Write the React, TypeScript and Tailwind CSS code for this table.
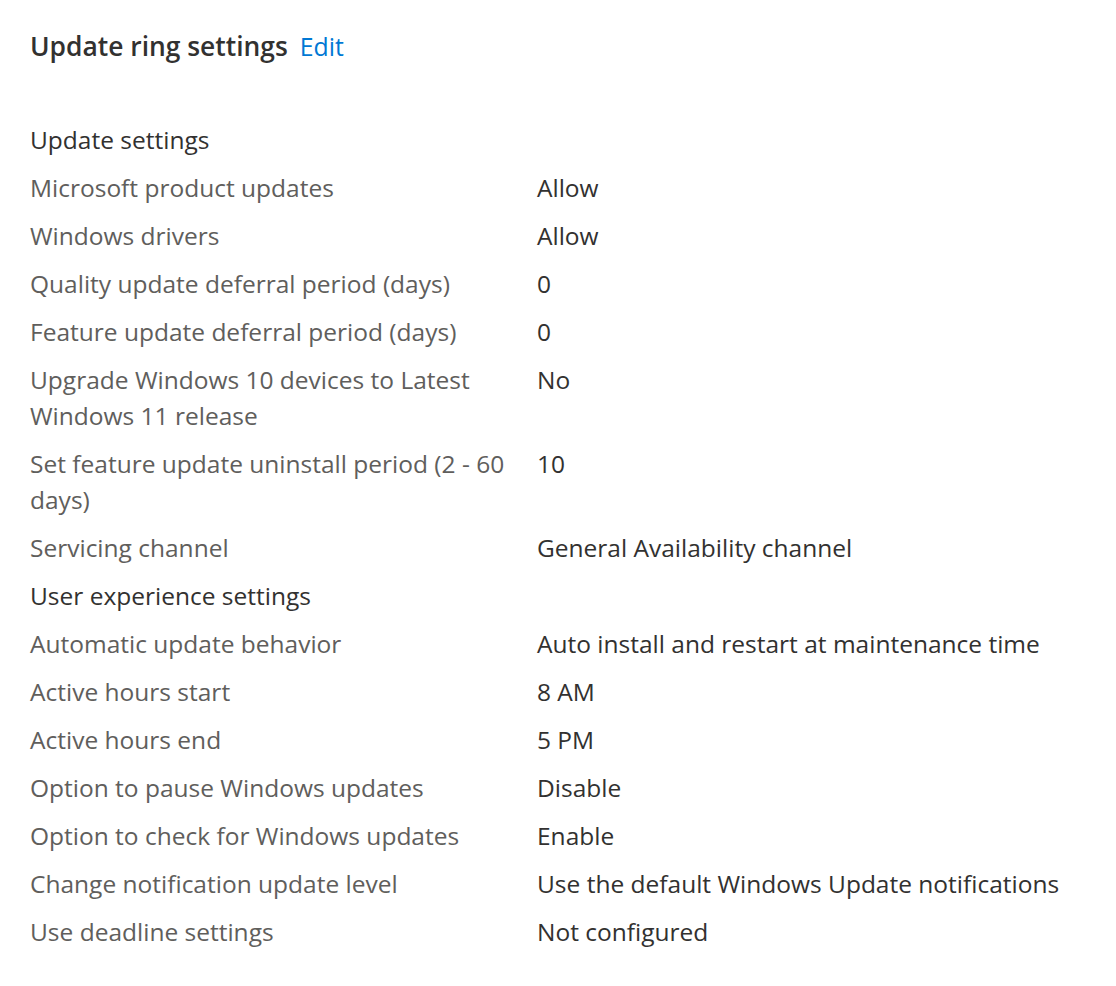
const sections = [
  {
    title: "Update settings",
    rows: [
      ["Microsoft product updates", "Allow"],
      ["Windows drivers", "Allow"],
      ["Quality update deferral period (days)", "0"],
      ["Feature update deferral period (days)", "0"],
      ["Upgrade Windows 10 devices to Latest Windows 11 release", "No"],
      ["Set feature update uninstall period (2 - 60 days)", "10"],
      ["Servicing channel", "General Availability channel"],
    ],
  },
  {
    title: "User experience settings",
    rows: [
      ["Automatic update behavior", "Auto install and restart at maintenance time"],
      ["Active hours start", "8 AM"],
      ["Active hours end", "5 PM"],
      ["Option to pause Windows updates", "Disable"],
      ["Option to check for Windows updates", "Enable"],
      ["Change notification update level", "Use the default Windows Update notifications"],
      ["Use deadline settings", "Not configured"],
    ],
  },
];

export default function App() {
  return (
    <div
      className="min-h-screen bg-white pl-[30px] pr-4 pt-[28px] text-[#323130]"
      style={{ fontFamily: '"Open Sans", "Noto Sans", sans-serif' }}
    >
      {/* Header */}
      <div className="flex items-baseline gap-[12px] leading-[36px]">
        <h2 className="text-[26.4px] font-semibold">Update ring settings</h2>
        <a href="#" className="text-[24.8px] text-[#0078d4]">
          Edit
        </a>
      </div>

      <div className="mt-[52px] text-[24.5px] leading-[36px]">
        {sections.map((section) => (
          <div key={section.title}>
            <div className="py-[6px]">{section.title}</div>
            {section.rows.map(([label, value]) => (
              <div key={label} className="grid grid-cols-[507px_1fr] py-[6px]">
                <div className="pr-[20px] text-[#605e5c]">{label}</div>
                <div>{value}</div>
              </div>
            ))}
          </div>
        ))}
      </div>
    </div>
  );
}
